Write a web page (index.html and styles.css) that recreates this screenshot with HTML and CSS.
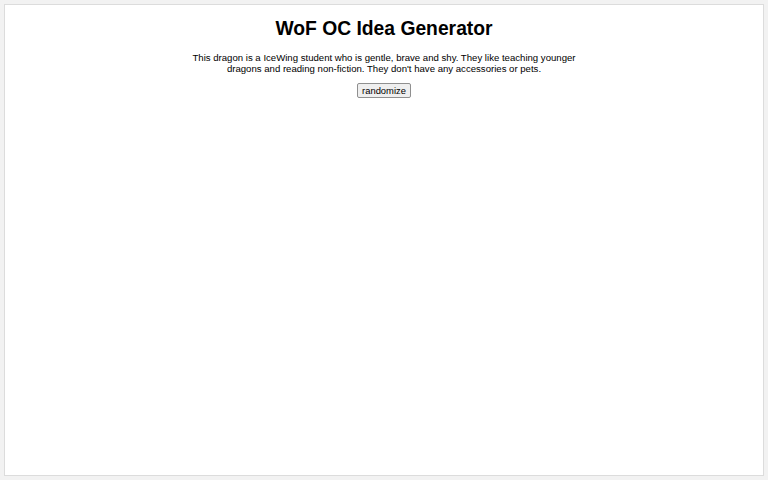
FILE: index.html
```html
<!DOCTYPE html>
<html lang="en">
<head>
<meta charset="utf-8">
<title>WoF OC Idea Generator</title>
<link rel="stylesheet" href="styles.css">
</head>
<body>
<main class="card">
  <h1 class="title">WoF OC Idea Generator</h1>
  <p class="idea">This dragon is a IceWing student who is gentle, brave and shy. They like teaching younger dragons and reading non-fiction. They don't have any accessories or pets.</p>
  <button class="randomize" type="button">randomize</button>
</main>
</body>
</html>
```
FILE: styles.css
```css
html, body {
  margin: 0;
  height: 100%;
}

body {
  background: #f2f2f2;
  padding: 4px;
  box-sizing: border-box;
  font-family: "Liberation Sans", Arial, sans-serif;
  color: #000;
}

.card {
  box-sizing: border-box;
  height: 472px;
  background: #fff;
  border: 1px solid #dcdcdc;
  display: flex;
  flex-direction: column;
  align-items: center;
  padding-top: 12px;
}

.title {
  margin: 0;
  font-size: 19.3px;
  font-weight: bold;
  line-height: 23px;
}

.idea {
  margin: 12px 0 0;
  max-width: 392px;
  text-align: center;
  font-size: 9.6px;
  line-height: 11px;
}

.randomize {
  margin-top: 9px;
  font-family: "Liberation Sans", Arial, sans-serif;
  font-size: 9.4px;
  padding: 1px 4px;
  background: #efefef;
  border: 1px solid #8f8f8f;
  border-radius: 2px;
  color: #000;
}
```
